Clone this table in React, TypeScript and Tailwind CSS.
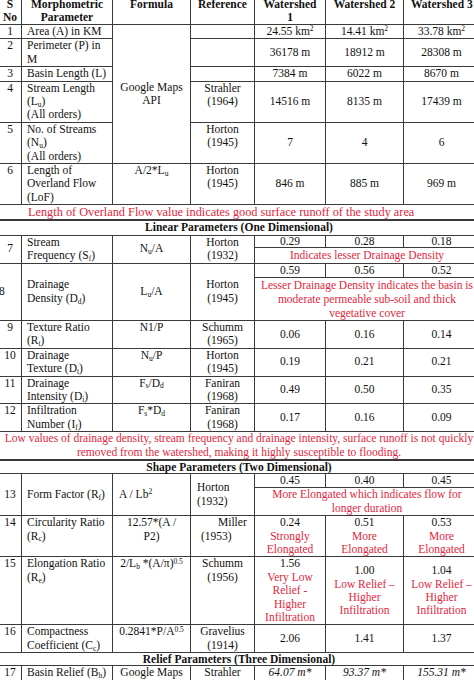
import React from "react";

const B = "border border-[#3a3a3a]";
const base = `${B} px-[5px] py-0`;
const red = "text-[#e3263d]";

function S({ c }: { c: string }) {
  return <sub className="text-[7.5px]">{c}</sub>;
}
function P({ c }: { c: string }) {
  return <sup className="text-[7.5px]">{c}</sup>;
}

type V = React.ReactNode;

function Vals({ a, b, c, cls = "" }: { a: V; b: V; c: V; cls?: string }) {
  return (
    <>
      <td className={`${base} text-center align-middle ${cls}`}>{a}</td>
      <td className={`${base} text-center align-middle ${cls}`}>{b}</td>
      <td className={`${base} text-center align-middle ${cls}`}>{c}</td>
    </>
  );
}

export default function App() {
  return (
    <div className="w-[474px] h-[680px] overflow-hidden bg-white">
      <table className="table-fixed border-collapse w-[481px] ml-[-2px] mt-[-3px] font-['Liberation_Serif','Times_New_Roman',serif] text-[11.5px] leading-[13.4px] text-[#111]">
        <colgroup>
          <col className="w-[23px]" />
          <col className="w-[91px]" />
          <col className="w-[78px]" />
          <col className="w-[64px]" />
          <col className="w-[71px]" />
          <col className="w-[78px]" />
          <col className="w-[76px]" />
        </colgroup>
        <tbody>
          <tr className="font-bold">
            <td className={`${B} px-0 text-center align-top leading-[13px]`}>S<br />No</td>
            <td className={`${base} text-center align-top leading-[13px]`}>Morphometric Parameter</td>
            <td className={`${base} text-center align-top leading-[13px]`}>Formula</td>
            <td className={`${base} text-center align-top leading-[13px]`}>Reference</td>
            <td className={`${base} text-center align-top leading-[13px]`}>Watershed 1</td>
            <td className={`${base} px-[2px] text-center align-top whitespace-nowrap leading-[13px]`}>Watershed 2</td>
            <td className={`${B} pl-[7px] text-left align-top whitespace-nowrap leading-[13px]`}>Watershed 3</td>
          </tr>

          <tr>
            <td className={`${B} px-0 text-center align-top`}>1</td>
            <td className={`${base} align-top`}>Area (A) in KM</td>
            <td rowSpan={5} className={`${base} text-center align-middle`}>Google Maps<br />API</td>
            <td className={`${base}`}></td>
            <Vals a={<>24.55 km<P c="2" /></>} b={<>14.41 km<P c="2" /></>} c={<>33.78 km<P c="2" /></>} />
          </tr>
          <tr>
            <td className={`${B} px-0 text-center align-top`}>2</td>
            <td className={`${base} align-top`}>Perimeter (P) in<br />M</td>
            <td className={`${base}`}></td>
            <Vals a="36178 m" b="18912 m" c="28308 m" />
          </tr>
          <tr>
            <td className={`${B} px-0 text-center align-top`}>3</td>
            <td className={`${base} align-top`}>Basin Length (L)</td>
            <td className={`${base}`}></td>
            <Vals a="7384 m" b="6022 m" c="8670 m" />
          </tr>
          <tr>
            <td className={`${B} px-0 text-center align-top`}>4</td>
            <td className={`${base} align-top`}>Stream Length<br />(L<S c="u" />)<br />(All orders)</td>
            <td className={`${base} text-center align-top`}>Strahler<br />(1964)</td>
            <Vals a="14516 m" b="8135 m" c="17439 m" />
          </tr>
          <tr>
            <td className={`${B} px-0 text-center align-top`}>5</td>
            <td className={`${base} align-top`}>No. of Streams<br />(N<S c="u" />)<br />(All orders)</td>
            <td className={`${base} text-center align-top`}>Horton<br />(1945)</td>
            <Vals a="7" b="4" c="6" />
          </tr>
          <tr>
            <td className={`${B} px-0 text-center align-top`}>6</td>
            <td className={`${base} align-top`}>Length of<br />Overland Flow<br />(LoF)</td>
            <td className={`${base} text-center align-top`}>A/2*L<S c="u" /></td>
            <td className={`${base} text-center align-top`}>Horton<br />(1945)</td>
            <Vals a="846 m" b="885 m" c="969 m" />
          </tr>

          <tr>
            <td colSpan={7} className={`${B} border-b-2 pl-[29px] text-left text-[12.3px] leading-[14px] ${red}`}>
              Length of Overland Flow value indicates good surface runoff of the study area
            </td>
          </tr>
          <tr>
            <td colSpan={7} className={`${B} text-center font-bold leading-[13.4px]`}>Linear Parameters (One Dimensional)</td>
          </tr>

          <tr>
            <td rowSpan={2} className={`${B} px-0 text-center align-middle`}>7</td>
            <td rowSpan={2} className={`${base} align-middle`}>Stream<br />Frequency (S<S c="f" />)</td>
            <td rowSpan={2} className={`${base} text-center align-middle`}>N<S c="u" />/A</td>
            <td rowSpan={2} className={`${base} text-center align-top`}>Horton<br />(1932)</td>
            <Vals a="0.29" b="0.28" c="0.18" cls="leading-[11px]" />
          </tr>
          <tr>
            <td colSpan={3} className={`${base} text-center ${red} leading-[14px]`}>Indicates lesser Drainage Density</td>
          </tr>
          <tr>
            <td rowSpan={2} className={`${B} px-0 text-left align-middle`}>8</td>
            <td rowSpan={2} className={`${base} align-middle`}>Drainage<br />Density (D<S c="d" />)</td>
            <td rowSpan={2} className={`${base} text-center align-middle`}>L<S c="u" />/A</td>
            <td rowSpan={2} className={`${base} text-center align-middle`}>Horton<br />(1945)</td>
            <Vals a="0.59" b="0.56" c="0.52" />
          </tr>
          <tr>
            <td colSpan={3} className={`${base} text-center ${red} leading-[14px]`}>
              <div className="flex justify-center whitespace-nowrap">Lesser Drainage Density indicates the basin is</div>
              moderate permeable sub-soil and thick<br />vegetative cover
            </td>
          </tr>
          <tr>
            <td className={`${B} px-0 text-center align-top`}>9</td>
            <td className={`${base} align-top`}>Texture Ratio<br />(R<S c="t" />)</td>
            <td className={`${base} text-center align-top`}>N1/P</td>
            <td className={`${base} text-center align-top`}>Schumm<br />(1965)</td>
            <Vals a="0.06" b="0.16" c="0.14" />
          </tr>
          <tr>
            <td className={`${B} px-0 text-center align-top`}>10</td>
            <td className={`${base} align-top`}>Drainage<br />Texture (D<S c="t" />)</td>
            <td className={`${base} text-center align-top`}>N<S c="u" />/P</td>
            <td className={`${base} text-center align-top`}>Horton<br />(1945)</td>
            <Vals a="0.19" b="0.21" c="0.21" />
          </tr>
          <tr>
            <td className={`${B} px-0 text-center align-top`}>11</td>
            <td className={`${base} align-top`}>Drainage<br />Intensity (D<S c="i" />)</td>
            <td className={`${base} text-center align-top`}>F<S c="s" />/D<S c="d" /></td>
            <td className={`${base} text-center align-top`}>Faniran<br />(1968)</td>
            <Vals a="0.49" b="0.50" c="0.35" />
          </tr>
          <tr>
            <td className={`${B} px-0 text-center align-top`}>12</td>
            <td className={`${base} align-top`}>Infiltration<br />Number (I<S c="f" />)</td>
            <td className={`${base} text-center align-top`}>F<S c="s" />*D<S c="d" /></td>
            <td className={`${base} text-center align-top`}>Faniran<br />(1968)</td>
            <Vals a="0.17" b="0.16" c="0.09" />
          </tr>

          <tr>
            <td colSpan={7} className={`${B} border-b-2 ${red} px-0 leading-[13.4px]`}>
              <div className="flex justify-center whitespace-nowrap">
                Low values of drainage density, stream frequency and drainage intensity, surface runoff is not quickly
              </div>
              <div className="text-center">removed from the watershed, making it highly susceptible to flooding.</div>
            </td>
          </tr>
          <tr>
            <td colSpan={7} className={`${B} text-center font-bold leading-[12px]`}>Shape Parameters (Two Dimensional)</td>
          </tr>

          <tr>
            <td rowSpan={2} className={`${B} px-0 text-center align-middle`}>13</td>
            <td rowSpan={2} className={`${base} align-middle`}>Form Factor (R<S c="f" />)</td>
            <td rowSpan={2} className={`${base} pl-[6px] text-left align-middle`}>A / Lb<P c="2" /></td>
            <td rowSpan={2} className={`${base} pl-[6px] text-left align-middle`}>Horton<br />(1932)</td>
            <Vals a="0.45" b="0.40" c="0.45" />
          </tr>
          <tr>
            <td colSpan={3} className={`${base} text-center ${red}`}>More Elongated which indicates flow for<br />longer duration</td>
          </tr>
          <tr>
            <td className={`${B} px-0 text-center align-top`}>14</td>
            <td className={`${base} align-top`}>Circularity Ratio<br />(R<S c="c" />)</td>
            <td className={`${base} text-center align-top`}>12.57*(A /<br />P2)</td>
            <td className={`${B} pl-[10px] pr-0 text-left align-top`}><span className="pl-[17px]">Miller</span><br />(1953)</td>
            <Vals
              a={<>0.24<br /><span className={red}>Strongly<br />Elongated</span></>}
              b={<>0.51<br /><span className={red}>More<br />Elongated</span></>}
              c={<>0.53<br /><span className={red}>More<br />Elongated</span></>}
            />
          </tr>
          <tr>
            <td className={`${B} px-0 text-center align-top`}>15</td>
            <td className={`${base} align-top`}>Elongation Ratio<br />(R<S c="e" />)</td>
            <td className={`${base} px-[2px] text-center align-top whitespace-nowrap`}>2/L<S c="b" /> *(A/π)<P c="0.5" /></td>
            <td className={`${base} text-center align-top`}>Schumm<br />(1956)</td>
            <Vals
              a={<>1.56<br /><span className={red}>Very Low<br />Relief -<br />Higher<br />Infiltration</span></>}
              b={<>1.00<br /><span className={red}>Low Relief –<br />Higher<br />Infiltration</span></>}
              c={<>1.04<br /><span className={red}>Low Relief –<br />Higher<br />Infiltration</span></>}
            />
          </tr>
          <tr>
            <td className={`${B} px-0 text-center align-top`}>16</td>
            <td className={`${base} align-top`}>Compactness<br />Coefficient (C<S c="c" />)</td>
            <td className={`${base} px-[2px] text-center align-top whitespace-nowrap`}>0.2841*P/A<P c="0.5" /></td>
            <td className={`${base} text-center align-top`}>Gravelius<br />(1914)</td>
            <Vals a="2.06" b="1.41" c="1.37" />
          </tr>

          <tr>
            <td colSpan={7} className={`${B} text-center font-bold leading-[12px]`}>Relief Parameters (Three Dimensional)</td>
          </tr>
          <tr>
            <td className={`${B} px-0 text-center align-top`}>17</td>
            <td className={`${base} align-top`}>Basin Relief (B<S c="h" />)</td>
            <td className={`${base} text-center align-top`}>Google Maps<br />API</td>
            <td className={`${base} text-center align-top`}>Strahler<br />(1964)</td>
            <td className={`${base} text-center align-top italic`}>64.07 m*</td>
            <td className={`${base} text-center align-top italic`}>93.37 m*</td>
            <td className={`${base} text-center align-top italic`}>155.31 m*</td>
          </tr>
        </tbody>
      </table>
    </div>
  );
}
